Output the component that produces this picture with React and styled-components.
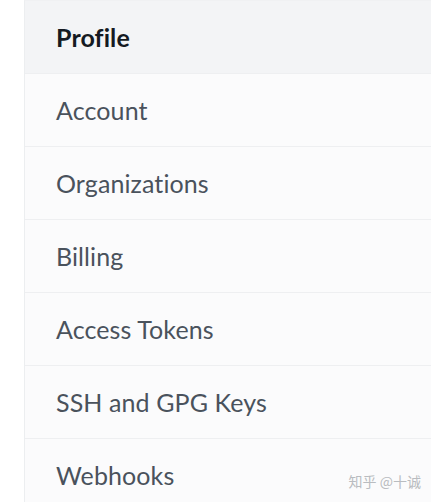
import React from "react";
import styled, { createGlobalStyle } from "styled-components";

const Global = createGlobalStyle`
  html, body { margin: 0; padding: 0; background: #ffffff; }
  body { font-family: Lato, "Noto Sans", sans-serif; overflow: hidden; }
`;

const Page = styled.div`
  width: 431px;
  height: 502px;
  padding-left: 24px;
  box-sizing: border-box;
  position: relative;
  overflow: hidden;
`;

const Panel = styled.nav`
  width: 440px;
  border-left: 1px solid #eceef0;
  border-top: 1px solid #f0f1f3;
  display: flex;
  flex-direction: column;
  background: #fcfcfd;
`;

const Item = styled.div`
  height: 72px;
  display: flex;
  align-items: center;
  padding-left: 31px;
  border-bottom: 1px solid #eeeff1;
  font-size: 25px;
  letter-spacing: 0.1px;
  font-weight: ${(p) => (p.$active ? 700 : 400)};
  color: ${(p) => (p.$active ? "#151a22" : "#4a525c")};
  background: ${(p) => (p.$active ? "#f3f4f6" : "#fbfbfc")};
`;

const Watermark = styled.div`
  position: absolute;
  right: 10px;
  bottom: 11px;
  font-family: "Noto Sans CJK SC", sans-serif;
  font-size: 14px;
  color: #b9bcc0;
`;

const items = ["Profile", "Account", "Organizations", "Billing", "Access Tokens", "SSH and GPG Keys", "Webhooks"];

export default function App() {
  return (
    <Page>
      <Global />
      <Panel>
        {items.map((t, i) => (
          <Item key={t} $active={i === 0}>{t}</Item>
        ))}
      </Panel>
      <Watermark>知乎 @十诚</Watermark>
    </Page>
  );
}
